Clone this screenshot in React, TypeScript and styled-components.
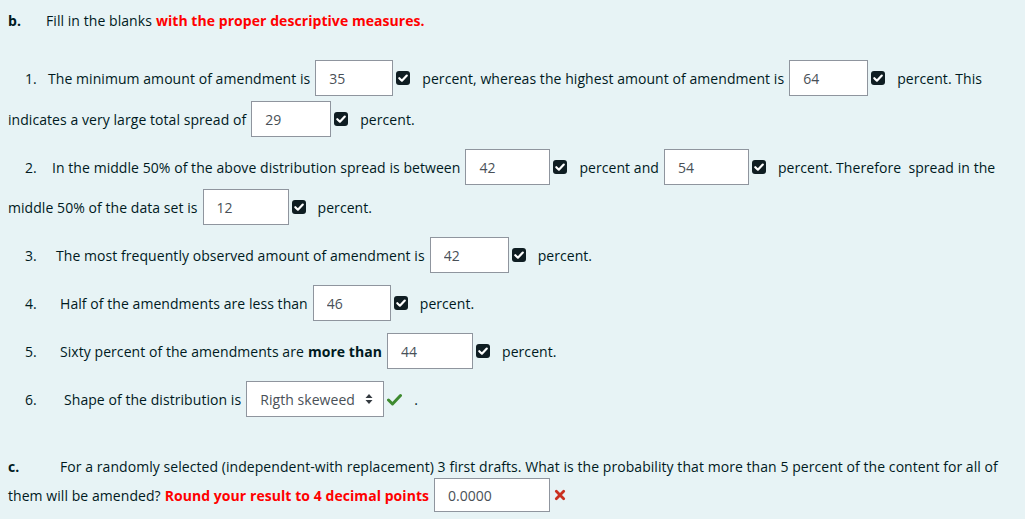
import React from "react";
import styled, { createGlobalStyle } from "styled-components";

const GlobalStyle = createGlobalStyle`
  html, body {
    margin: 0;
    padding: 0;
    background: #e7f3f5;
  }
  body {
    font-family: "Open Sans", "Noto Sans", sans-serif;
    font-size: 14px;
    letter-spacing: 0.06px;
    color: #001a1e;
  }
`;

export const Page = styled.div`
  width: 1025px;
  height: 519px;
  padding: 0 8px;
  box-sizing: border-box;
  background: #e7f3f5;
  overflow: hidden;
`;

export const Row = styled.div<{ $h?: number; $top?: number }>`
  display: flex;
  align-items: center;
  white-space: nowrap;
  height: ${(p) => p.$h ?? 40}px;
  margin-top: ${(p) => p.$top ?? 0}px;
`;

export const Label = styled.span<{ $w: number }>`
  display: inline-block;
  width: ${(p) => p.$w}px;
  font-weight: 700;
  flex-shrink: 0;
`;

export const Num = styled.span<{ $w: number }>`
  display: inline-block;
  width: ${(p) => p.$w}px;
  margin-left: 17px;
  flex-shrink: 0;
`;

export const Red = styled.b`
  color: #ff0000;
  font-weight: 700;
  margin-left: 4px;
`;

export const Strong = styled.b`
  font-weight: 700;
  margin-left: 4px;
`;

export const Input = styled.input<{ $w: number; $h?: number }>`
  width: ${(p) => p.$w}px;
  height: ${(p) => p.$h ?? 36}px;
  box-sizing: border-box;
  margin: 0 3px 0 5px;
  padding: 0 0 0 13px;
  border: 1px solid #8f959e;
  background: #ffffff;
  font-family: inherit;
  font-size: 14px;
  color: #495057;
  outline: none;
  flex-shrink: 0;
`;

export const Select = styled.div`
  display: flex;
  align-items: center;
  justify-content: space-between;
  width: 138px;
  height: 36px;
  box-sizing: border-box;
  margin: 0 3px 0 5px;
  padding: 0 10px 0 13px;
  border: 1px solid #8f959e;
  background: #ffffff;
  font-size: 14px;
  color: #495057;
`;

export const After = styled.span`
  margin-left: 12px;
`;

const CheckBox = () => (
  <svg width="14" height="14" viewBox="0 0 14 14" style={{ flexShrink: 0 }}>
    <rect x="0" y="0" width="14" height="14" rx="3" fill="#0f1d22" />
    <path
      d="M3.3 7.2 L5.9 9.7 L10.8 4.6"
      stroke="#ffffff"
      strokeWidth="2.2"
      fill="none"
      strokeLinecap="round"
      strokeLinejoin="round"
    />
  </svg>
);

const GreenCheck = () => (
  <svg width="15" height="13" viewBox="0 0 15 13" style={{ flexShrink: 0 }}>
    <path
      d="M1.5 7 L5.5 11 L13.5 2.5"
      stroke="#3e8a2f"
      strokeWidth="3"
      fill="none"
      strokeLinecap="round"
      strokeLinejoin="round"
    />
  </svg>
);

const RedCross = () => (
  <svg width="12" height="12" viewBox="0 0 12 12" style={{ flexShrink: 0, marginLeft: 1 }}>
    <path
      d="M2.3 2.3 L9.7 9.7 M9.7 2.3 L2.3 9.7"
      stroke="#ca3120"
      strokeWidth="2.8"
      strokeLinecap="round"
    />
  </svg>
);

const Arrows = () => (
  <svg width="8" height="12" viewBox="0 0 8 12">
    <path d="M4 1 L7.5 5 H0.5 Z M4 11 L0.5 7 H7.5 Z" fill="#343a40" />
  </svg>
);

const Blank = ({ value, w }: { value: string; w: number }) => (
  <>
    <Input $w={w} defaultValue={value} readOnly />
    <CheckBox />
  </>
);

export default function App() {
  return (
    <>
      <GlobalStyle />
      <Page>
        <Row $h={40}>
          <Label $w={38}>b.</Label>
          Fill in the blanks
          <Red>with the proper descriptive measures.</Red>
        </Row>

        <Row $top={18}>
          <Num $w={23}>1.</Num>
          The minimum amount of amendment is
          <Blank value="35" w={78} />
          <After>percent, whereas the highest amount of amendment is</After>
          <Blank value="64" w={79} />
          <After>percent. This</After>
        </Row>
        <Row $top={1}>
          indicates a very large total spread of
          <Blank value="29" w={80} />
          <After>percent.</After>
        </Row>

        <Row $top={8}>
          <Num $w={27}>2.</Num>
          In the middle 50% of the above distribution spread is between
          <Blank value="42" w={85} />
          <After>percent and</After>
          <Blank value="54" w={85} />
          <After>percent. Therefore&nbsp; spread in the</After>
        </Row>
        <Row>
          middle 50% of the data set is
          <Blank value="12" w={86} />
          <After>percent.</After>
        </Row>

        <Row $top={8}>
          <Num $w={31}>3.</Num>
          The most frequently observed amount of amendment is
          <Blank value="42" w={79} />
          <After>percent.</After>
        </Row>

        <Row $top={8}>
          <Num $w={35}>4.</Num>
          Half of the amendments are less than
          <Blank value="46" w={78} />
          <After>percent.</After>
        </Row>

        <Row $top={8}>
          <Num $w={35}>5.</Num>
          Sixty percent of the amendments are
          <Strong>more than</Strong>
          <Blank value="44" w={86} />
          <After>percent.</After>
        </Row>

        <Row $top={8}>
          <Num $w={39}>6.</Num>
          Shape of the distribution is
          <Select>
            <span>Rigth skeweed</span>
            <Arrows />
          </Select>
          <GreenCheck />
          <After>.</After>
        </Row>

        <Row $h={30} $top={32}>
          <Label $w={52}>c.</Label>
          For a randomly selected (independent-with replacement) 3 first drafts. What is the probability that more than 5 percent of the content for all of
        </Row>
        <Row $h={28}>
          them will be amended?
          <Red>Round your result to 4 decimal points</Red>
          <Input $w={116} $h={34} defaultValue="0.0000" readOnly />
          <RedCross />
        </Row>
      </Page>
    </>
  );
}
